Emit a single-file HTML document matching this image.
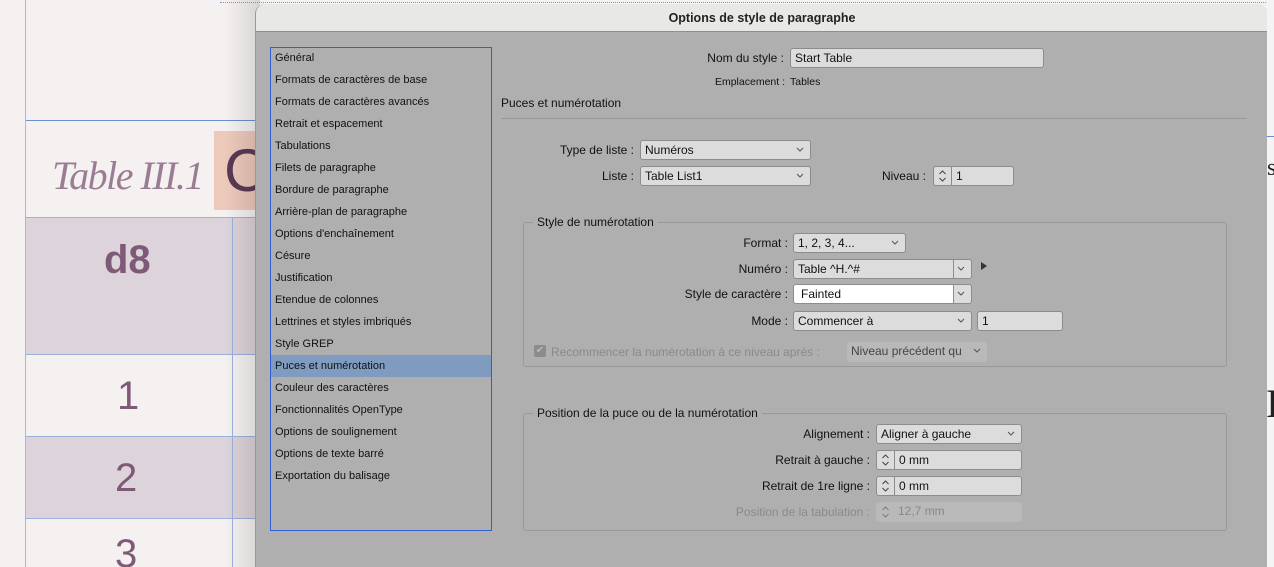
<!DOCTYPE html>
<html><head><meta charset="utf-8"><style>
*{margin:0;padding:0;box-sizing:border-box}
html,body{width:1274px;height:567px;overflow:hidden}
body{position:relative;background:#f6f2f2;font-family:"Liberation Sans","DejaVu Sans",sans-serif;font-size:11.5px;color:#111}
.a{position:absolute;white-space:nowrap}
.lbl{position:absolute;white-space:nowrap;text-align:right}
.f{position:absolute;height:20px;background:#dcdcdc;border:1px solid #8c8c8c;border-radius:3px;padding:2px 4px;line-height:15px;font-size:12px}
.chev{position:absolute;right:6px;top:6px;width:8px;height:5px}
.sep{position:absolute;top:0;bottom:0;border-left:1px solid #8c8c8c}
.stp{position:absolute;left:4px;top:2px;width:9px;height:14px}
.grp{position:absolute;border:1px solid #999;border-radius:3px}
.gt{position:absolute;background:#afafaf;padding:0 4px;font-size:12px}
.li{position:absolute;left:275px;font-size:11px;white-space:nowrap}
</style></head><body>
<svg width="0" height="0" style="position:absolute"><defs>
<symbol id="ch" viewBox="0 0 8 5"><path d="M1 1 L4 4 L7 1" fill="none" stroke="#555" stroke-width="1"/></symbol>
<symbol id="st" viewBox="0 0 9 14"><path d="M1.5 5 L4.5 2 L7.5 5 M1.5 9 L4.5 12 L7.5 9" fill="none" stroke="#444" stroke-width="1"/></symbol>
</defs></svg>
<!-- background page -->
<div class="a" style="left:0;top:0;width:260px;height:567px;background:#f5f1f1"></div>
<div class="a" style="left:25px;top:0;width:1px;height:567px;background:#3ee"></div>
<div class="a" style="left:26px;top:120px;width:230px;height:1px;background:#6a8fd0"></div>
<div class="a" style="left:214px;top:131px;width:42px;height:79px;background:#ecc9bb"></div>
<div class="a" style="left:52px;top:152px;font-family:'Liberation Serif',serif;font-style:italic;font-size:40px;color:#9a7d95;letter-spacing:-1.5px">Table III.1</div>
<div class="a" style="left:224px;top:136px;font-size:60px;color:#5a3a55">C</div>
<div class="a" style="left:26px;top:217px;width:230px;height:137px;background:#ddd3da"></div>
<div class="a" style="left:26px;top:436px;width:230px;height:82px;background:#ddd3da"></div>
<div class="a" style="left:26px;top:217px;width:230px;height:1px;background:#9bb0dc"></div>
<div class="a" style="left:26px;top:354px;width:230px;height:1px;background:#9bb0dc"></div>
<div class="a" style="left:26px;top:436px;width:230px;height:1px;background:#9bb0dc"></div>
<div class="a" style="left:26px;top:518px;width:230px;height:1px;background:#9bb0dc"></div>
<div class="a" style="left:232px;top:217px;width:1px;height:350px;background:#9bb0dc"></div>
<div class="a" style="left:104px;top:238px;font-size:40px;font-weight:bold;color:#7f5a78">d8</div>
<div class="a" style="left:117px;top:374px;font-size:40px;color:#7f5a78">1</div>
<div class="a" style="left:115px;top:456px;font-size:40px;color:#7f5a78">2</div>
<div class="a" style="left:115px;top:532px;font-size:40px;color:#7f5a78;height:35px;overflow:hidden">3</div>
<div class="a" style="left:225px;top:0;width:35px;height:567px;background:linear-gradient(90deg,rgba(0,0,0,0),rgba(0,0,0,0.12))"></div>
<div class="a" style="left:220px;top:2px;width:1054px;border-top:1px dotted #7b8fd0"></div>
<!-- right page strip -->
<div class="a" style="left:1267px;top:0;width:7px;height:567px;background:#f4f4f4"></div>
<div class="a" style="left:1267px;top:136px;width:7px;height:1px;background:#6a8fd0"></div>
<div class="a" style="left:1267px;top:155px;font-family:'Liberation Serif',serif;font-size:24px;color:#222">s</div>
<div class="a" style="left:1266px;top:380px;font-family:'Liberation Serif',serif;font-size:40px;color:#222">I</div>
<!-- dialog -->
<div class="a" style="left:255px;top:4px;width:1012px;height:563px;background:#afafaf;border-radius:10px 10px 0 0;overflow:hidden;border-left:1px solid #999">
 <div class="a" style="left:0;top:0;width:1012px;height:28px;background:#e8e8e7;border-bottom:1px solid #8f8f8f;text-align:center;line-height:28px;font-weight:bold;font-size:12.5px;color:#222">Options de style de paragraphe</div>
</div>
<!-- list box -->
<div class="a" style="left:270px;top:47px;width:222px;height:484px;border:1px solid #2f5fd0"></div>
<div class="a" style="left:271px;top:355px;width:220px;height:22px;background:#7f9bc0"></div>
<div class="li" style="top:52px">Général</div>
<div class="li" style="top:74px">Formats de caractères de base</div>
<div class="li" style="top:96px">Formats de caractères avancés</div>
<div class="li" style="top:118px">Retrait et espacement</div>
<div class="li" style="top:140px">Tabulations</div>
<div class="li" style="top:162px">Filets de paragraphe</div>
<div class="li" style="top:184px">Bordure de paragraphe</div>
<div class="li" style="top:206px">Arrière-plan de paragraphe</div>
<div class="li" style="top:228px">Options d'enchaînement</div>
<div class="li" style="top:250px">Césure</div>
<div class="li" style="top:272px">Justification</div>
<div class="li" style="top:294px">Etendue de colonnes</div>
<div class="li" style="top:316px">Lettrines et styles imbriqués</div>
<div class="li" style="top:338px">Style GREP</div>
<div class="li" style="top:360px">Puces et numérotation</div>
<div class="li" style="top:382px">Couleur des caractères</div>
<div class="li" style="top:404px">Fonctionnalités OpenType</div>
<div class="li" style="top:426px">Options de soulignement</div>
<div class="li" style="top:448px">Options de texte barré</div>
<div class="li" style="top:470px">Exportation du balisage</div>
<!-- top fields -->
<div class="lbl" style="right:490px;top:51px;font-size:12px">Nom du style :</div>
<div class="f" style="left:790px;top:48px;width:254px">Start Table</div>
<div class="lbl" style="right:489px;top:76px;font-size:10.5px">Emplacement :</div>
<div class="a" style="left:790px;top:76px;font-size:10.5px">Tables</div>
<div class="a" style="left:501px;top:96px;font-size:12px">Puces et numérotation</div>
<div class="a" style="left:501px;top:118px;width:746px;height:1px;background:#999"></div>
<div class="lbl" style="right:640px;top:143px;font-size:12px">Type de liste :</div>
<div class="f" style="left:640px;top:140px;width:171px">Numéros<svg class="chev"><use href="#ch"/></svg></div>
<div class="lbl" style="right:640px;top:169px;font-size:12px">Liste :</div>
<div class="f" style="left:640px;top:166px;width:171px">Table List1<svg class="chev"><use href="#ch"/></svg></div>
<div class="lbl" style="right:348px;top:169px;font-size:12px">Niveau :</div>
<div class="f" style="left:933px;top:166px;width:81px;padding-left:22px">1<span class="sep" style="left:17px"></span><svg class="stp"><use href="#st"/></svg></div>
<!-- group 1 -->
<div class="grp" style="left:523px;top:222px;width:704px;height:145px"></div>
<div class="gt" style="left:533px;top:215px">Style de numérotation</div>
<div class="lbl" style="right:486px;top:236px;font-size:12px">Format :</div>
<div class="f" style="left:793px;top:233px;width:113px">1, 2, 3, 4...<svg class="chev"><use href="#ch"/></svg></div>
<div class="lbl" style="right:486px;top:262px;font-size:12px">Numéro :</div>
<div class="f" style="left:793px;top:259px;width:179px">Table ^H.^#<span class="sep" style="left:159px"></span><svg class="chev"><use href="#ch"/></svg></div>
<svg class="a" style="left:981px;top:262px" width="6" height="8"><path d="M0 0 L6 4 L0 8Z" fill="#333"/></svg>
<div class="lbl" style="right:486px;top:287px;font-size:12px">Style de caractère :</div>
<div class="f" style="left:793px;top:284px;width:179px;background:linear-gradient(90deg,#fff 159px,#dcdcdc 159px);padding-left:7px">Fainted<span class="sep" style="left:159px"></span><svg class="chev"><use href="#ch"/></svg></div>
<div class="lbl" style="right:486px;top:314px;font-size:12px">Mode :</div>
<div class="f" style="left:793px;top:311px;width:179px">Commencer à<svg class="chev"><use href="#ch"/></svg></div>
<div class="f" style="left:977px;top:311px;width:86px">1</div>
<div class="a" style="left:534px;top:345px;width:12px;height:12px;background:#8c8c8c;border-radius:2px;color:#bbb;font-size:10px;line-height:12px;text-align:center">&#10004;</div>
<div class="a" style="left:551px;top:345px;font-size:12px;color:#8a8a8a">Recommencer la numérotation à ce niveau après :</div>
<div class="a" style="left:847px;top:342px;width:140px;height:20px;background:#b9b9b9;border-radius:3px;padding:2px 4px;font-size:12px;color:#444">Niveau précédent qu<svg class="chev"><use href="#ch"/></svg></div>
<!-- group 2 -->
<div class="grp" style="left:523px;top:413px;width:704px;height:118px"></div>
<div class="gt" style="left:533px;top:406px">Position de la puce ou de la numérotation</div>
<div class="lbl" style="right:404px;top:427px;font-size:12px">Alignement :</div>
<div class="f" style="left:876px;top:424px;width:146px">Aligner à gauche<svg class="chev"><use href="#ch"/></svg></div>
<div class="lbl" style="right:404px;top:453px;font-size:12px">Retrait à gauche :</div>
<div class="f" style="left:876px;top:450px;width:146px;padding-left:22px">0 mm<span class="sep" style="left:17px"></span><svg class="stp"><use href="#st"/></svg></div>
<div class="lbl" style="right:404px;top:479px;font-size:12px">Retrait de 1re ligne :</div>
<div class="f" style="left:876px;top:476px;width:146px;padding-left:22px">0 mm<span class="sep" style="left:17px"></span><svg class="stp"><use href="#st"/></svg></div>
<div class="lbl" style="right:404px;top:505px;font-size:12px;color:#8a8a8a">Position de la tabulation :</div>
<div class="a" style="left:876px;top:502px;width:146px;height:20px;background:#b9b9b9;border-radius:3px;padding:2px 4px 2px 22px;font-size:12px;color:#888">12,7 mm<svg class="stp" style="left:5px;top:3px;opacity:.5"><use href="#st"/></svg></div>
</body></html>
